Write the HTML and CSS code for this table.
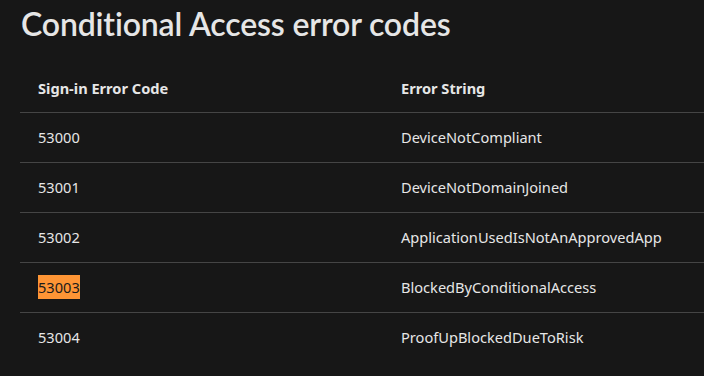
FILE: index.html
```html
<!DOCTYPE html>
<html lang="en">
<head>
    <meta charset="UTF-8">
    <meta name="viewport" content="width=device-width, initial-scale=1.0">
    <title>Conditional Access error codes</title>
    <link rel="stylesheet" href="styles.css">
</head>
<body>
    <div class="doc">
        <h1>Conditional Access error codes</h1>

        <table class="codes">
            <thead>
                <tr>
                    <th class="col-code">Sign-in Error Code</th>
                    <th>Error String</th>
                </tr>
            </thead>
            <tbody>
                <tr>
                    <td>53000</td>
                    <td>DeviceNotCompliant</td>
                </tr>
                <tr>
                    <td>53001</td>
                    <td>DeviceNotDomainJoined</td>
                </tr>
                <tr>
                    <td>53002</td>
                    <td>ApplicationUsedIsNotAnApprovedApp</td>
                </tr>
                <tr>
                    <td><mark class="hit">53003</mark></td>
                    <td>BlockedByConditionalAccess</td>
                </tr>
                <tr>
                    <td>53004</td>
                    <td>ProofUpBlockedDueToRisk</td>
                </tr>
            </tbody>
        </table>
    </div>
</body>
</html>
```

FILE: styles.css
```css
* {
    margin: 0;
    padding: 0;
    box-sizing: border-box;
}

body {
    font-family: 'Noto Sans', 'Open Sans', Arial, sans-serif;
    background: #171717;
    color: #e6e6e6;
    overflow: hidden;
}

.doc {
    padding: 0 0 0 20px;
}

.doc h1 {
    font-family: Lato, 'Noto Sans', sans-serif;
    font-size: 32px;
    font-weight: 600;
    letter-spacing: -0.15px;
    line-height: 48px;
    margin-left: 1px;
    color: #e6e6e6;
}

.codes {
    width: 100%;
    border-collapse: collapse;
    margin-top: 16px;
    font-size: 14.6px;
}

.codes th,
.codes td {
    text-align: left;
    padding: 0 18px;
    height: 50px;
    vertical-align: middle;
    border-bottom: 1px solid #454545;
}

.codes th {
    font-weight: 700;
    height: 48px;
}

.codes .col-code {
    width: 363px;
}

.codes tbody tr:last-child td {
    border-bottom: none;
}

.hit {
    background: #fe9535;
    color: #1b1b1b;
    padding: 2px 0;
}
```
